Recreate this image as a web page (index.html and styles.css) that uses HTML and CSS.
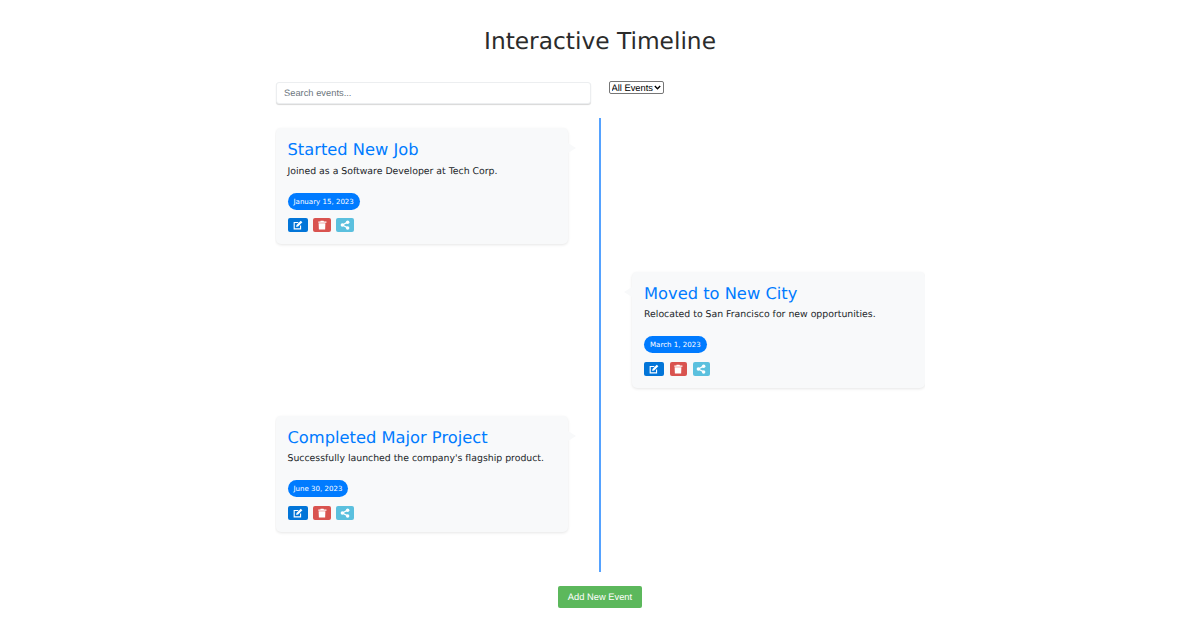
FILE: index.html
```html
<!DOCTYPE html>
<html lang="en">
<head>
    <meta charset="UTF-8">
    <meta name="viewport" content="width=device-width, initial-scale=1.0">
    <title>Interactive Timeline</title>
    <link rel="stylesheet" href="styles.css">
</head>
<body>

    <h1>Interactive Timeline</h1>

    <!-- Search and filter -->
    <div class="controls">
        <input type="text" class="search" placeholder="Search events...">
        <select class="filter">
            <option>All Events</option>
            <option>Career</option>
            <option>Personal</option>
        </select>
    </div>

    <!-- Timeline -->
    <div class="timeline">
        <div class="item left">
            <div class="card">
                <h2>Started New Job</h2>
                <p>Joined as a Software Developer at Tech Corp.</p>
                <span class="date">January 15, 2023</span>
                <div class="actions">
                    <button class="btn edit" aria-label="Edit"><svg viewBox="0 0 16 16"><path d="M1 3h7.500v1.800H2.800v8.400h8.400V8.600H13V15H1z"/><path d="M5.600 7.800 12.400 1l2.600 2.600-6.800 6.800-3.200.6z"/></svg></button>
                    <button class="btn delete" aria-label="Delete"><svg viewBox="0 0 16 16"><path d="M5.600 1h4.800l.7 1.300h4v1.900h-13V2.300h3.400zM2.600 5.200h10.800l-.4 9.800H3z"/></svg></button>
                    <button class="btn share" aria-label="Share"><svg viewBox="0 0 16 16"><circle cx="12.200" cy="3.400" r="2.800"/><circle cx="12.200" cy="12.600" r="2.800"/><circle cx="3.800" cy="8" r="2.800"/><path d="M3.800 8l8.400-4.600M3.800 8l8.400 4.600" stroke="#fff" stroke-width="2"/></svg></button>
                </div>
            </div>
        </div>
        <div class="item right">
            <div class="card">
                <h2>Moved to New City</h2>
                <p>Relocated to San Francisco for new opportunities.</p>
                <span class="date">March 1, 2023</span>
                <div class="actions">
                    <button class="btn edit" aria-label="Edit"><svg viewBox="0 0 16 16"><path d="M1 3h7.500v1.800H2.800v8.400h8.400V8.600H13V15H1z"/><path d="M5.600 7.800 12.400 1l2.600 2.600-6.800 6.800-3.200.6z"/></svg></button>
                    <button class="btn delete" aria-label="Delete"><svg viewBox="0 0 16 16"><path d="M5.600 1h4.800l.7 1.300h4v1.900h-13V2.300h3.400zM2.600 5.200h10.800l-.4 9.800H3z"/></svg></button>
                    <button class="btn share" aria-label="Share"><svg viewBox="0 0 16 16"><circle cx="12.200" cy="3.400" r="2.800"/><circle cx="12.200" cy="12.600" r="2.800"/><circle cx="3.800" cy="8" r="2.800"/><path d="M3.800 8l8.400-4.600M3.800 8l8.400 4.600" stroke="#fff" stroke-width="2"/></svg></button>
                </div>
            </div>
        </div>
        <div class="item left">
            <div class="card">
                <h2>Completed Major Project</h2>
                <p>Successfully launched the company's flagship product.</p>
                <span class="date">June 30, 2023</span>
                <div class="actions">
                    <button class="btn edit" aria-label="Edit"><svg viewBox="0 0 16 16"><path d="M1 3h7.500v1.800H2.800v8.400h8.400V8.600H13V15H1z"/><path d="M5.600 7.800 12.400 1l2.600 2.600-6.800 6.800-3.200.6z"/></svg></button>
                    <button class="btn delete" aria-label="Delete"><svg viewBox="0 0 16 16"><path d="M5.600 1h4.800l.7 1.300h4v1.900h-13V2.300h3.400zM2.600 5.200h10.800l-.4 9.800H3z"/></svg></button>
                    <button class="btn share" aria-label="Share"><svg viewBox="0 0 16 16"><circle cx="12.200" cy="3.400" r="2.800"/><circle cx="12.200" cy="12.600" r="2.800"/><circle cx="3.800" cy="8" r="2.800"/><path d="M3.800 8l8.400-4.600M3.800 8l8.400 4.600" stroke="#fff" stroke-width="2"/></svg></button>
                </div>
            </div>
        </div>
    </div>

    <div class="footer">
        <button class="add-btn">Add New Event</button>
    </div>

</body>
</html>
```

FILE: styles.css
```css
body {
    font-family: 'DejaVu Sans', sans-serif;
    text-rendering: geometricPrecision;
    background: #fff;
    color: #212529;
    width: 650px;
    margin: 0 auto;
    height: 630px;
    overflow: hidden;
}

h1 {
    font-size: 23.3px;
    font-weight: 400;
    line-height: 29px;
    text-align: center;
    margin: 0;
    padding-top: 27px;
    color: #2b2b2b;
}

.controls {
    display: flex;
    align-items: flex-start;
    margin-top: 25px;
    height: 37px;
    padding-left: 1px;
}

.search {
    width: 315px;
    height: 22px;
    box-sizing: border-box;
    padding: 0 7px 1px;
    margin-top: 1px;
    font-family: 'Liberation Sans', sans-serif;
    font-size: 9.33px;
    text-rendering: geometricPrecision;
    background: #fff;
    border: 1px solid #eceef0;
    border-radius: 3px;
    box-shadow: 0 1px 1px rgba(0, 0, 0, 0.16);
}

.search::placeholder {
    color: #6c757d;
}

.filter {
    appearance: none;
    margin-left: 18px;
    width: 55px;
    height: 13px;
    box-sizing: border-box;
    padding: 0 0 0 1.5px;
    font-family: 'Liberation Sans', sans-serif;
    font-size: 9.33px;
    text-rendering: geometricPrecision;
    color: #000;
    border: 1px solid #767676;
    border-radius: 2px;
    background: #fff url("data:image/svg+xml,%3Csvg xmlns='http://www.w3.org/2000/svg' width='7' height='5'%3E%3Cpath d='M.8 1 3.500 3.700 6.200 1' fill='none' stroke='%23000' stroke-width='1.400'/%3E%3C/svg%3E") no-repeat right 2px center;
}

.timeline {
    position: relative;
    height: 454px;
    padding-top: 10.4px;
    box-sizing: border-box;
}

.timeline::before {
    content: "";
    position: absolute;
    top: 0;
    bottom: 0;
    left: 324px;
    width: 2px;
    background: #55a2ff;
}

.item {
    width: 292.5px;
    height: 143.8px;
}

.item.left {
    margin-left: 0.5px;
}

.item.right {
    width: 293px;
    margin-left: 357px;
}

.card {
    position: relative;
    height: 116px;
    box-sizing: border-box;
    padding: 12px 12px;
    background: #f8f9fa;
    border-radius: 5px;
    box-shadow: 0 1px 3px rgba(0, 0, 0, 0.1);
}

.card::after {
    content: "";
    position: absolute;
    top: 15px;
    border: 5px solid transparent;
    border-width: 5px 8px;
}

.left .card::after {
    left: 100%;
    border-left-color: #f8f9fa;
}

.right .card::after {
    right: 100%;
    border-right-color: #f8f9fa;
}

h2 {
    font-size: 16.3px;
    font-weight: 400;
    line-height: 20px;
    margin: 0 0 4.2px;
    color: #007bff;
}

p {
    font-size: 9.33px;
    line-height: 14px;
    margin: 0 0 10px;
}

.date {
    display: inline-block;
    font-size: 7.05px;
    line-height: 17px;
    padding: 0 6px;
    background: #007bff;
    color: #fff;
    border-radius: 9px;
}

.actions {
    display: flex;
    gap: 5.5px;
    margin-top: 8.6px;
}

.btn {
    height: 14px;
    padding: 0;
    border: none;
    border-radius: 2px;
    display: flex;
    align-items: center;
    justify-content: center;
    cursor: pointer;
}

.btn svg {
    width: 10px;
    height: 10px;
    fill: #fff;
}

.edit {
    width: 20px;
    background: #0275d8;
}

.delete {
    width: 17.5px;
    background: #d9534f;
}

.share {
    width: 17.5px;
    background: #5bc0de;
}

.footer {
    display: flex;
    justify-content: center;
    margin-top: 14px;
}

.add-btn {
    width: 84px;
    height: 22px;
    padding: 0;
    font-family: 'Liberation Sans', sans-serif;
    font-size: 9.33px;
    text-rendering: geometricPrecision;
    background: #5cb85c;
    color: #fff;
    border: none;
    border-radius: 2px;
    cursor: pointer;
}
```
